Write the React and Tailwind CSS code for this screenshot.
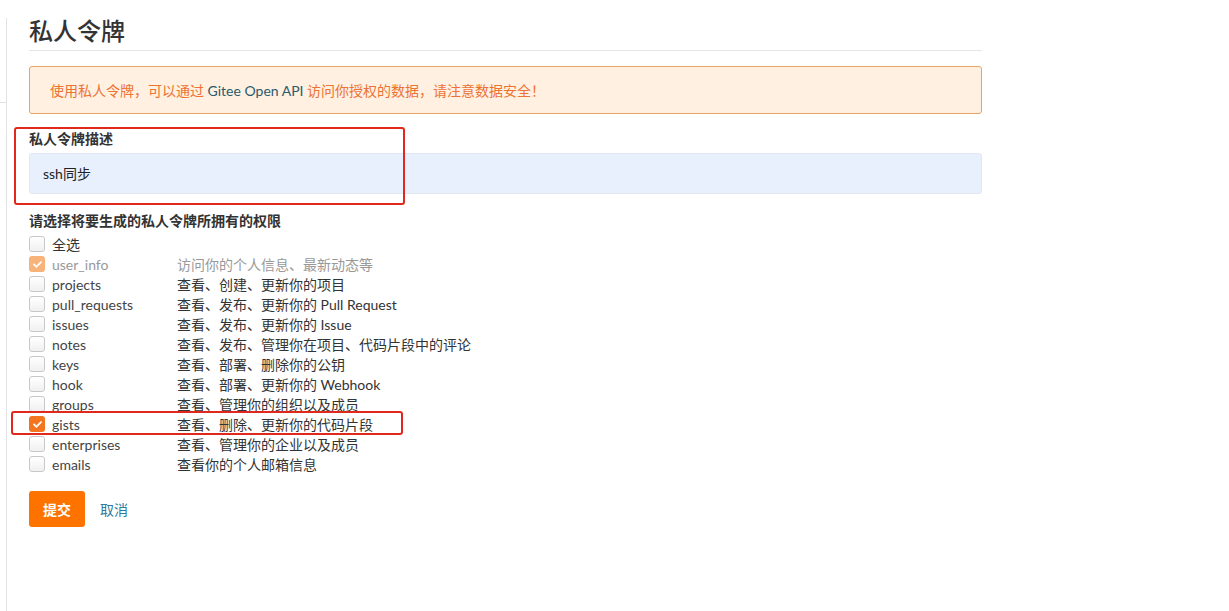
import { FaCheck } from "react-icons/fa";

const perms = [
  { key: "user_info", desc: "访问你的个人信息、最新动态等", checked: true, disabled: true },
  { key: "projects", desc: "查看、创建、更新你的项目" },
  { key: "pull_requests", desc: "查看、发布、更新你的 Pull Request" },
  { key: "issues", desc: "查看、发布、更新你的 Issue" },
  { key: "notes", desc: "查看、发布、管理你在项目、代码片段中的评论" },
  { key: "keys", desc: "查看、部署、删除你的公钥" },
  { key: "hook", desc: "查看、部署、更新你的 Webhook" },
  { key: "groups", desc: "查看、管理你的组织以及成员" },
  { key: "gists", desc: "查看、删除、更新你的代码片段", checked: true },
  { key: "enterprises", desc: "查看、管理你的企业以及成员" },
  { key: "emails", desc: "查看你的个人邮箱信息" },
];

function Box({ checked, disabled }) {
  if (checked) {
    return (
      <span
        className={
          "flex h-4 w-4 shrink-0 items-center justify-center rounded-[3px] text-white " +
          (disabled ? "bg-[#f7b37a]" : "bg-[#f4751f]")
        }
      >
        <FaCheck size={9} />
      </span>
    );
  }
  return (
    <span className="h-4 w-4 shrink-0 rounded-[3px] border border-[#c8c8c8] bg-gradient-to-b from-white to-[#f0f0f0]" />
  );
}

export default function App() {
  return (
    <div className="relative flex min-h-[611px] bg-white font-['Lato','Noto_Sans_CJK_SC',sans-serif] text-[14px] text-[#333]">
      {/* sidebar edge */}
      <div className="mt-[18px] w-[7px] shrink-0 border-r border-[#e3e3e3]">
        <div className="h-[85px] border-b border-[#e3e3e3]" />
      </div>

      <div className="ml-[22px] w-[953px] pt-[14px]">
        <h1 className="border-b border-[#e5e5e5] pb-[2px] text-[24px] leading-[34px] font-medium text-[#333]">
          私人令牌
        </h1>

        <div className="mt-[15px] flex h-[48px] items-center rounded-[3px] border border-[#e9a465] bg-[#fff0e1] px-5 text-[14px] text-[#ec7332]">
          使用私人令牌，可以通过&nbsp;<span className="text-[#2b5b6c]">Gitee Open API</span>&nbsp;访问你授权的数据，请注意数据安全！
        </div>

        <div className="mt-[15px] font-bold leading-5 text-[#333]">私人令牌描述</div>
        <div className="mt-1 flex h-[41px] items-center rounded-[3px] border border-[#e2e6ee] bg-[#e8f0fe] px-[13px] text-[14px] text-[#222]">
          ssh同步
        </div>

        <div className="mt-[17px] font-bold leading-5 text-[#333]">请选择将要生成的私人令牌所拥有的权限</div>

        <div className="mt-[3px] flex flex-col">
          <label className="flex h-5 items-center">
            <Box />
            <span className="ml-[7px] text-[#333]">全选</span>
          </label>
          {perms.map((p) => (
            <label key={p.key} className="flex h-5 items-center">
              <Box checked={p.checked} disabled={p.disabled} />
              <span className={"ml-[7px] w-[125px] " + (p.disabled ? "text-[#999]" : "text-[#444]")}>{p.key}</span>
              <span className={p.disabled ? "text-[#999]" : "text-[#333]"}>{p.desc}</span>
            </label>
          ))}
        </div>

        <div className="mt-[17px] flex items-center">
          <button className="h-9 w-14 rounded-[3px] bg-[#fe7300] text-[14px] font-bold text-white">提交</button>
          <a className="ml-[15px] text-[14px] text-[#2d7aa0]">取消</a>
        </div>
      </div>

      {/* annotation boxes */}
      <div className="absolute left-[14px] top-[127px] h-[78px] w-[391px] rounded-[3px] border-2 border-[#e0291c]" />
      <div className="absolute left-[11px] top-[411px] h-[24px] w-[392px] rounded-[3px] border-2 border-[#e0291c]" />
    </div>
  );
}
